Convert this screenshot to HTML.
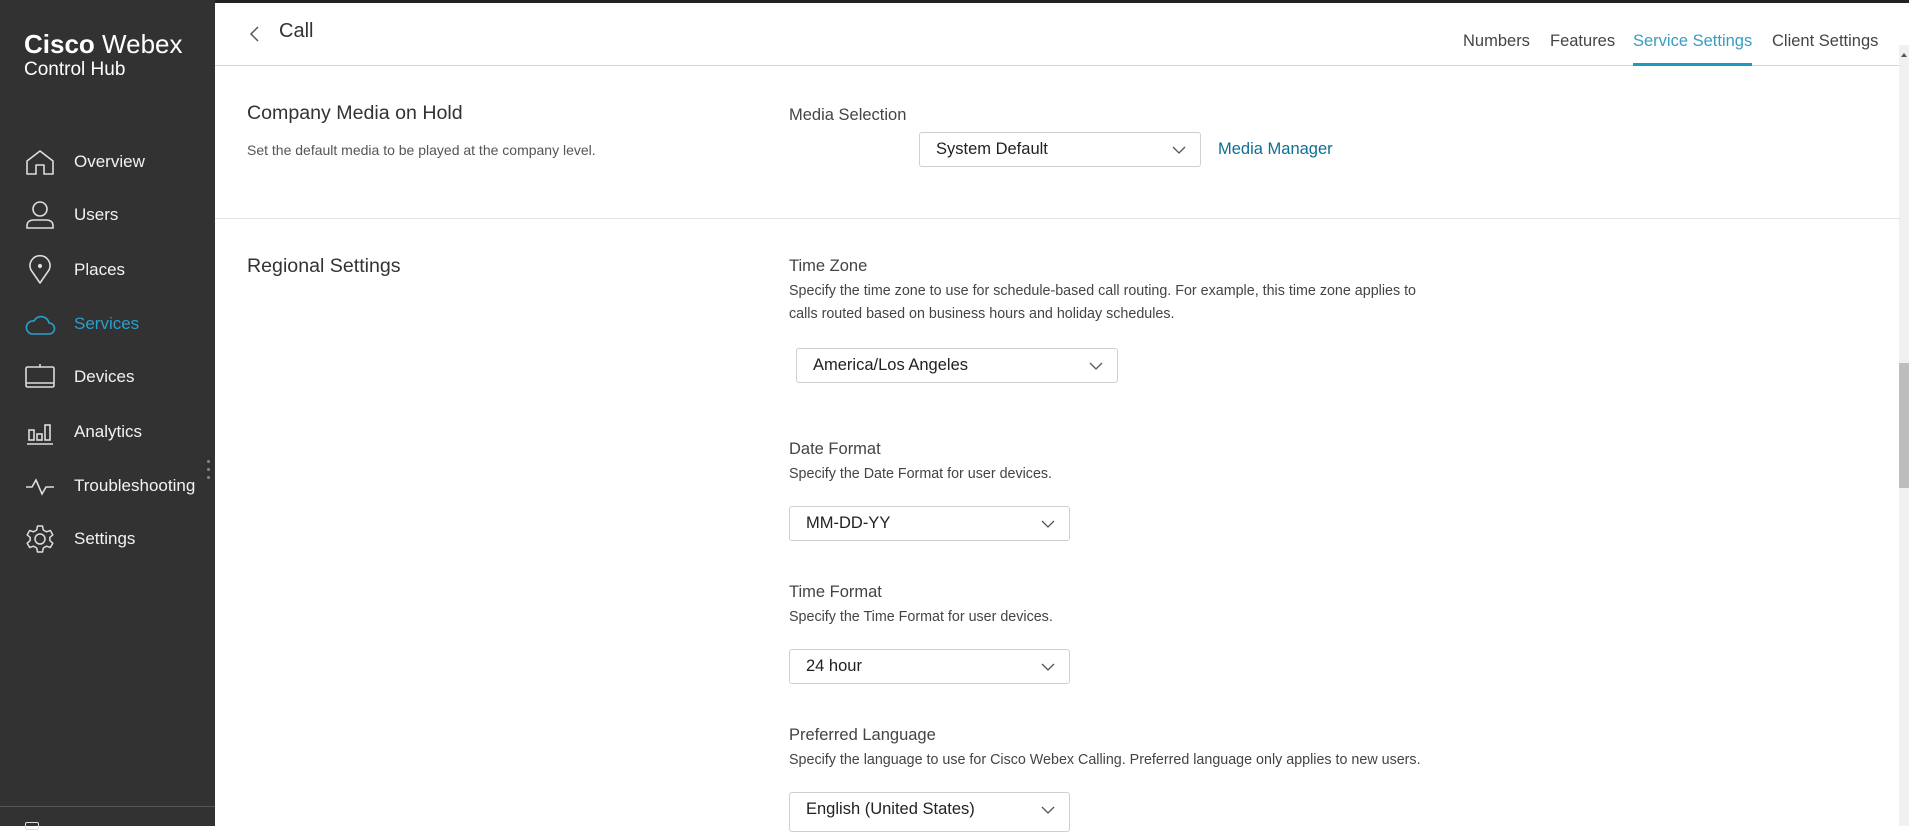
<!DOCTYPE html>
<html><head><meta charset="utf-8">
<style>
*{margin:0;padding:0;box-sizing:border-box}
body{width:1909px;height:826px;overflow:hidden;background:#fff;font-family:"Liberation Sans",Arial,sans-serif;position:relative;color:#333}
.a{position:absolute;white-space:nowrap}
#side{position:absolute;left:0;top:0;width:215px;height:826px;background:#323232}
.nav{position:absolute;left:74px;font-size:17px;color:#f2f2f2}
.ic{position:absolute;left:24px;width:32px;height:32px}
.lbl{font-size:16.5px;color:#444}
.desc{font-size:14.3px;color:#444}
.dd{position:absolute;border:1px solid #cfcfcf;border-radius:3px;background:#fff;height:35px}
.dd span{position:absolute;left:16px;top:7px;font-size:16.5px;color:#222}
.dd svg{position:absolute;right:14px;top:13px}
</style></head><body>
<div class="a" style="left:0;top:0;width:1909px;height:3px;background:#222"></div>
<div id="side">
  <div class="a" style="left:24px;top:29px;font-size:26px;color:#fff"><b>Cisco</b> <span style="font-weight:normal">Webex</span></div>
  <div class="a" style="left:24px;top:59px;font-size:19px;color:#fff">Control Hub</div>

  <svg class="ic" style="top:146px" viewBox="0 0 32 32" fill="none" stroke="#ddd" stroke-width="1.6"><path d="M3 15 L16 5 L29 15 V28 H20 V19 H12 V28 H3 Z" stroke-linejoin="round"/></svg>
  <div class="nav" style="top:152px">Overview</div>

  <svg class="ic" style="top:199px" viewBox="0 0 32 32" fill="none" stroke="#ddd" stroke-width="1.6"><circle cx="16" cy="10" r="7"/><path d="M3 29 V27 Q3 21 10 21 H22 Q29 21 29 27 V29 Z"/></svg>
  <div class="nav" style="top:205px">Users</div>

  <svg class="ic" style="top:254px" viewBox="0 0 32 32" fill="none" stroke="#ddd" stroke-width="1.6"><path d="M16 29 L7 16 A10 10 0 1 1 25 16 Z" stroke-linejoin="round"/><circle cx="16" cy="12" r="1.3" fill="#ddd"/></svg>
  <div class="nav" style="top:260px">Places</div>

  <svg class="ic" style="top:308px" viewBox="0 0 32 32" fill="none" stroke="#2a9fc9" stroke-width="1.6"><path d="M8 26 H25 A5.5 5.5 0 0 0 25 15 A8 8 0 0 0 10 13 A6.5 6.5 0 0 0 8 26 Z"/></svg>
  <div class="nav" style="top:314px;color:#2a9fc9">Services</div>

  <svg class="ic" style="top:361px" viewBox="0 0 32 32" fill="none" stroke="#ddd" stroke-width="1.6"><rect x="2" y="6" width="28" height="20" rx="1.5"/><path d="M2 22 H30 M16 3 V6"/></svg>
  <div class="nav" style="top:367px">Devices</div>

  <svg class="ic" style="top:416px" viewBox="0 0 32 32" fill="none" stroke="#ddd" stroke-width="1.6"><rect x="5" y="14" width="5" height="10"/><rect x="13" y="18" width="5" height="6"/><rect x="21" y="9" width="5" height="15"/><path d="M3 28 H29"/></svg>
  <div class="nav" style="top:422px">Analytics</div>

  <svg class="ic" style="top:470px" viewBox="0 0 32 32" fill="none" stroke="#ddd" stroke-width="1.6"><path d="M2 17 H8 L12 10 L18 24 L22 17 H30"/></svg>
  <div class="nav" style="top:476px">Troubleshooting</div>

  <svg class="ic" style="top:523px" viewBox="0 0 32 32" fill="none" stroke="#ddd" stroke-width="1.5"><circle cx="16" cy="16" r="5"/><path d="M13.5 3 H18.5 L19.3 7 L22.5 8.8 L26.3 7.5 L28.8 11.8 L25.8 14.5 V17.5 L28.8 20.2 L26.3 24.5 L22.5 23.2 L19.3 25 L18.5 29 H13.5 L12.7 25 L9.5 23.2 L5.7 24.5 L3.2 20.2 L6.2 17.5 V14.5 L3.2 11.8 L5.7 7.5 L9.5 8.8 L12.7 7 Z" stroke-linejoin="round"/></svg>
  <div class="nav" style="top:529px">Settings</div>

  <div class="a" style="left:207px;top:460px;width:3px;height:3px;background:#888;border-radius:50%"></div>
  <div class="a" style="left:207px;top:468px;width:3px;height:3px;background:#888;border-radius:50%"></div>
  <div class="a" style="left:207px;top:476px;width:3px;height:3px;background:#888;border-radius:50%"></div>
  <div class="a" style="left:0;top:806px;width:215px;height:1px;background:#555"></div>
  <div class="a" style="left:25px;top:822px;width:14px;height:8px;border:1.5px solid #ddd;border-radius:2px"></div>
</div>

<svg class="a" style="left:248px;top:25px" width="12" height="18" viewBox="0 0 12 18" fill="none" stroke="#555" stroke-width="1.5"><path d="M10 2 L3 9 L10 16"/></svg>
<div class="a" style="left:279px;top:20px;font-size:20px;color:#333">Call</div>
<div class="a" style="left:1463px;top:32px;font-size:16.5px;color:#444">Numbers</div>
<div class="a" style="left:1550px;top:32px;font-size:16.5px;color:#444">Features</div>
<div class="a" style="left:1633px;top:32px;font-size:16.5px;color:#3a9cc0">Service Settings</div>
<div class="a" style="left:1772px;top:32px;font-size:16.5px;color:#444">Client Settings</div>
<div class="a" style="left:215px;top:65px;width:1685px;height:1px;background:#d6d6d6"></div>
<div class="a" style="left:1633px;top:63px;width:119px;height:3px;background:#1d9bbd"></div>

<div class="a" style="left:1899px;top:45px;width:10px;height:781px;background:#f0f0f0"></div>
<div class="a" style="left:1899px;top:363px;width:10px;height:125px;background:#bdbdbd"></div>
<svg class="a" style="left:1901px;top:53px" width="6" height="4"><path d="M0 4 L3 0 L6 4Z" fill="#555"/></svg>

<div class="a" style="left:247px;top:102px;font-size:19.6px;color:#333">Company Media on Hold</div>
<div class="a desc" style="left:247px;top:142px;font-size:14px;color:#555">Set the default media to be played at the company level.</div>
<div class="a lbl" style="left:789px;top:106px">Media Selection</div>
<div class="dd" style="left:919px;top:132px;width:282px"><span>System Default</span><svg width="14" height="9" viewBox="0 0 14 9" fill="none" stroke="#555" stroke-width="1.3"><path d="M1 1 L7 7 L13 1"/></svg></div>
<div class="a" style="left:1218px;top:140px;font-size:16.5px;color:#0e6f92">Media Manager</div>
<div class="a" style="left:215px;top:218px;width:1685px;height:1px;background:#e2e2e2"></div>

<div class="a" style="left:247px;top:255px;font-size:19.6px;color:#333">Regional Settings</div>
<div class="a lbl" style="left:789px;top:257px">Time Zone</div>
<div class="a desc" style="left:789px;top:283px">Specify the time zone to use for schedule-based call routing. For example, this time zone applies to</div>
<div class="a desc" style="left:789px;top:306px">calls routed based on business hours and holiday schedules.</div>
<div class="dd" style="left:796px;top:348px;width:322px"><span>America/Los Angeles</span><svg width="14" height="9" viewBox="0 0 14 9" fill="none" stroke="#555" stroke-width="1.3"><path d="M1 1 L7 7 L13 1"/></svg></div>

<div class="a lbl" style="left:789px;top:440px">Date Format</div>
<div class="a desc" style="left:789px;top:466px">Specify the Date Format for user devices.</div>
<div class="dd" style="left:789px;top:506px;width:281px"><span>MM-DD-YY</span><svg width="14" height="9" viewBox="0 0 14 9" fill="none" stroke="#555" stroke-width="1.3"><path d="M1 1 L7 7 L13 1"/></svg></div>

<div class="a lbl" style="left:789px;top:583px">Time Format</div>
<div class="a desc" style="left:789px;top:609px">Specify the Time Format for user devices.</div>
<div class="dd" style="left:789px;top:649px;width:281px"><span>24 hour</span><svg width="14" height="9" viewBox="0 0 14 9" fill="none" stroke="#555" stroke-width="1.3"><path d="M1 1 L7 7 L13 1"/></svg></div>

<div class="a lbl" style="left:789px;top:726px">Preferred Language</div>
<div class="a desc" style="left:789px;top:752px">Specify the language to use for Cisco Webex Calling. Preferred language only applies to new users.</div>
<div class="dd" style="left:789px;top:792px;width:281px;height:40px"><span>English (United States)</span><svg width="14" height="9" viewBox="0 0 14 9" fill="none" stroke="#555" stroke-width="1.3"><path d="M1 1 L7 7 L13 1"/></svg></div>
</body></html>
